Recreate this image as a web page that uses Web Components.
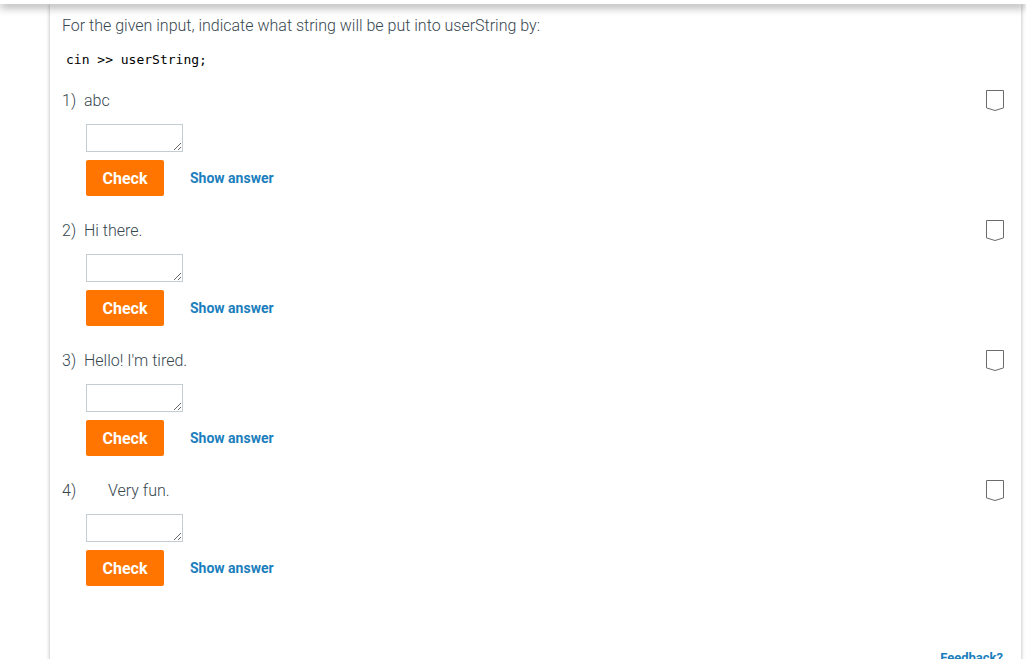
<!DOCTYPE html>
<html lang="en">
<head>
<meta charset="utf-8">
<title>Participation activity</title>
<style>
html, body { margin: 0; height: 100%; }
body { overflow: hidden; background: #fff; font: 300 16px/24px Roboto, sans-serif; color: #37474f; }
</style>
</head>
<body>
<activity-page>
  <activity-card>
    <span slot="intro">For the given input, indicate what string will be put into userString by:</span>
    <code slot="code">cin &gt;&gt; userString;</code>
    <short-answer number="1">abc</short-answer>
    <short-answer number="2">Hi there.</short-answer>
    <short-answer number="3">Hello! I'm tired.</short-answer>
    <short-answer number="4" indented>Very fun.</short-answer>
  </activity-card>
</activity-page>

<template id="page">
  <style>
    :host { display: flex; flex-direction: column; height: 100vh; }
    header { flex: none; height: 4px; background: #fff; box-shadow: 0 2px 10px rgba(0,0,0,.6); z-index: 1; }
    main { flex: 1; min-height: 0; overflow: hidden; padding: 0 5px 0 50px; }
  </style>
  <header></header>
  <main><slot></slot></main>
</template>

<template id="card">
  <style>
    :host { display: block; padding: 10px 16px 24px 12px; box-shadow: 0 0 4px rgba(0,0,0,.3); }
    p { margin: 0; }
    pre { margin: 10px 0 16px; padding-left: 4px; font: 400 13px/24px "DejaVu Sans Mono", monospace; color: #000; }
    ::slotted(code) { font: inherit; }
    footer { display: flex; justify-content: flex-end; margin-top: 38px; }
    a { font-size: 13px; font-weight: 700; line-height: 24px; color: #1b7ebd; text-decoration: none; padding-right: 2px; }
  </style>
  <p><slot name="intro"></slot></p>
  <pre><slot name="code"></slot></pre>
  <slot></slot>
  <footer><a href="#feedback">Feedback?</a></footer>
</template>

<template id="answer">
  <style>
    :host { display: block; padding-bottom: 22px; }
    .head { display: flex; align-items: center; height: 26px; margin-bottom: 10px; }
    .num { width: 22px; }
    label { flex: 1; }
    :host([indented]) label { padding-left: 24px; }
    .body { display: flex; flex-direction: column; gap: 8px; padding-left: 24px; }
    textarea { box-sizing: border-box; width: 97px; height: 28px; margin: 0; padding: 4px; border: 1px solid #c3cdd2; border-radius: 0; background: #fff; font: 400 14px/18px "DejaVu Sans Mono", monospace; overflow: hidden; resize: both; outline: none; }
    .actions { display: flex; align-items: center; gap: 26px; }
    button { font-family: inherit; font-weight: 700; border: 0; margin: 0; cursor: pointer; }
    .check { width: 78px; height: 36px; padding: 0; border-radius: 2px; background: #ff7500; color: #fff; font-size: 16px; }
    .show { padding: 0; background: none; color: #1b7ebd; font-size: 14px; line-height: 24px; }
    svg { display: block; }
  </style>
  <div class="head">
    <span class="num"></span><label for="answer"><slot></slot></label>
    <svg width="20" height="24" viewBox="0 0 20 24" fill="none" stroke="#6b6b6b" aria-hidden="true"><path d="M1.5 1.5h17v17.4L10 21.5 1.5 18.9z"/></svg>
  </div>
  <div class="body">
    <textarea id="answer" spellcheck="false"></textarea>
    <div class="actions"><button class="check" type="button">Check</button><button class="show" type="button">Show answer</button></div>
  </div>
</template>

<script>
class Templated extends HTMLElement {
  constructor() {
    super();
    const source = document.getElementById(this.constructor.template);
    this.attachShadow({ mode: "open" }).append(source.content.cloneNode(true));
  }
}
class ActivityPage extends Templated { static template = "page"; }
class ActivityCard extends Templated { static template = "card"; }
class ShortAnswer extends Templated {
  static template = "answer";
  connectedCallback() {
    this.shadowRoot.querySelector(".num").textContent = this.getAttribute("number") + ")";
  }
}
customElements.define("activity-page", ActivityPage);
customElements.define("activity-card", ActivityCard);
customElements.define("short-answer", ShortAnswer);
</script>
</body>
</html>
